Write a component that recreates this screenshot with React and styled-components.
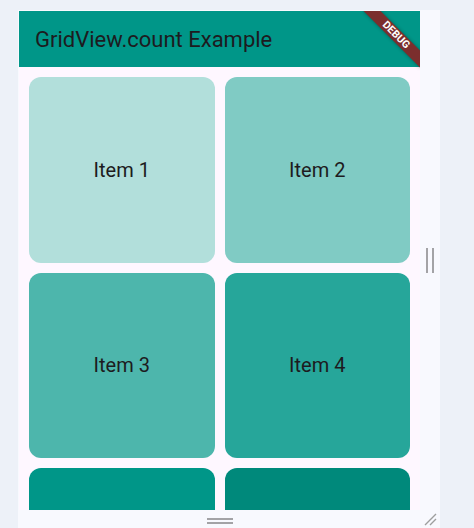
import React from "react";
import styled, { createGlobalStyle } from "styled-components";

const Global = createGlobalStyle`
  html, body { margin: 0; padding: 0; }
  body {
    background: #edf1f8;
    font-family: Roboto, "Noto Sans", "Liberation Sans", sans-serif;
    overflow: hidden;
  }
`;

const Page = styled.div`
  padding: 10px 0 0 18px;
  height: 528px;
  box-sizing: border-box;
`;

const Frame = styled.div`
  width: 422px;
  height: 518px;
  box-sizing: border-box;
  padding: 1px 0 0 1px;
  background: #f8f9fe;
  display: grid;
  grid-template-columns: 401px 20px;
  grid-template-rows: 499px 18px;
`;

const Viewport = styled.div`
  position: relative;
  overflow: hidden;
  background: #fef7ff;
  display: flex;
  flex-direction: column;
`;

const AppBar = styled.header`
  flex: none;
  height: 56px;
  background: #009688;
  display: flex;
  align-items: center;
  padding-left: 16px;
`;

const Title = styled.h1`
  margin: 0;
  font-size: 22px;
  font-weight: 400;
  color: #1d1b20;
  letter-spacing: 0;
`;

const Grid = styled.div`
  flex: 1;
  overflow: hidden;
  padding: 10px;
  display: grid;
  grid-template-columns: 1fr 1fr;
  grid-auto-rows: 185.5px;
  gap: 10px;
`;

const Tile = styled.div`
  border-radius: 12px;
  background: ${(p) => p.$color};
  display: flex;
  align-items: center;
  justify-content: center;
  font-size: 20px;
  color: #1d1b20;
`;

/* debug ribbon across the top-right corner of the app */
const Banner = styled.div`
  position: absolute;
  top: 18px;
  right: -16px;
  width: 80px;
  height: 12px;
  transform: rotate(45deg);
  background: #7b2e2d;
  box-shadow: 0 0 4px rgba(0, 0, 0, 0.35);
  display: flex;
  align-items: center;
  justify-content: center;
  color: #fff;
  font-size: 10.5px;
  font-weight: 700;
  line-height: 1;
`;

const SideGutter = styled.div`
  display: flex;
  align-items: center;
  justify-content: center;
  padding-right: 1px;
`;

const VGrip = styled.div`
  width: 8px;
  height: 25px;
  display: flex;
  justify-content: space-between;
  &::before, &::after {
    content: "";
    width: 2px;
    background: #a3a3a6;
  }
`;

const BottomStrip = styled.div`
  display: flex;
  justify-content: center;
  padding-top: 8px;
`;

const HGrip = styled.div`
  width: 26px;
  height: 6px;
  display: flex;
  flex-direction: column;
  justify-content: space-between;
  &::before, &::after {
    content: "";
    height: 2px;
    background: #a3a3a6;
  }
`;

const Corner = styled.div`
  display: flex;
  align-items: flex-end;
  justify-content: flex-start;
  padding: 0 0 2px 4px;
`;

const items = [
  { label: "Item 1", color: "#b2dfdb" },
  { label: "Item 2", color: "#80cbc4" },
  { label: "Item 3", color: "#4db6ac" },
  { label: "Item 4", color: "#26a69a" },
  { label: "Item 5", color: "#009688" },
  { label: "Item 6", color: "#00897b" },
];

export default function App() {
  return (
    <>
      <Global />
      <Page>
        <Frame>
          <Viewport>
            <AppBar>
              <Title>GridView.count Example</Title>
            </AppBar>
            <Grid>
              {items.map((it) => (
                <Tile key={it.label} $color={it.color}>
                  {it.label}
                </Tile>
              ))}
            </Grid>
            <Banner>DEBUG</Banner>
          </Viewport>
          <SideGutter>
            <VGrip />
          </SideGutter>
          <BottomStrip>
            <HGrip />
          </BottomStrip>
          <Corner>
            <svg width="13" height="13" viewBox="0 0 13 13">
              <path d="M1 12 L12 1 M6 12 L12 6" stroke="#9e9e9e" strokeWidth="1.4" fill="none" />
            </svg>
          </Corner>
        </Frame>
      </Page>
    </>
  );
}
